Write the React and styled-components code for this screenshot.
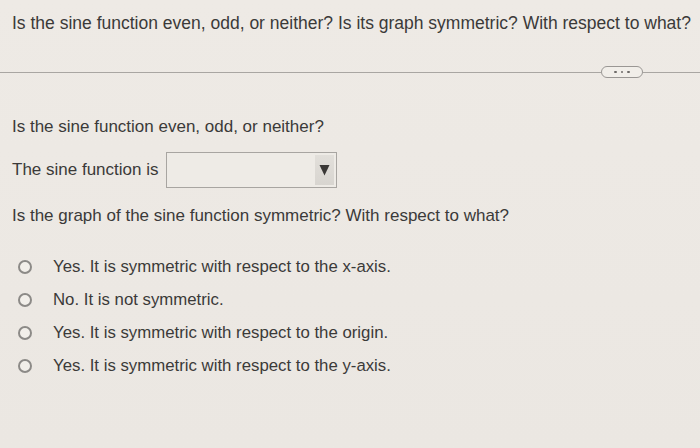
import React from "react";
import styled, { createGlobalStyle } from "styled-components";

const GlobalStyle = createGlobalStyle`
    html, body {
        margin: 0;
        padding: 0;
        background: #ece8e3;
    }
    body {
        font-family: "Liberation Sans", Arial, sans-serif;
        color: #3b3a39;
    }
`;

const Page = styled.div`
    width: 700px;
    height: 448px;
    overflow: hidden;
    background: linear-gradient(180deg, #eeeae5 0%, #ebe7e2 100%);
`;

const Title = styled.div`
    padding: 13px 12px 0;
    font-size: 17.5px;
    line-height: 20px;
    white-space: nowrap;
`;

const DividerRow = styled.div`
    display: flex;
    align-items: center;
    margin-top: 33px;
`;

const Line = styled.div`
    height: 1px;
    background: #a9a6a2;
    flex: ${props => props.grow ? 1 : "none"};
    width: ${props => props.grow ? "auto" : `${props.w}px`};
`;

const MoreButton = styled.div`
    display: flex;
    align-items: center;
    justify-content: center;
    gap: 4px;
    width: 40px;
    height: 10px;
    border: 1.5px solid #9a9794;
    border-radius: 7px;
    background: #f1eee9;
`;

const Dot = styled.span`
    width: 2.5px;
    height: 2.5px;
    border-radius: 50%;
    background: #6e6b68;
`;

const Body = styled.div`
    padding: 0 12px;
`;

const Question = styled.div`
    font-size: 17px;
    line-height: 20px;
    margin-top: ${props => props.top}px;
`;

const AnswerRow = styled.div`
    display: flex;
    align-items: center;
    gap: 8px;
    margin-top: 15px;
    font-size: 17px;
`;

const SelectBox = styled.div`
    display: flex;
    justify-content: flex-end;
    align-items: stretch;
    width: 169px;
    height: 34px;
    border: 1px solid #a8a5a1;
    background: #eeebe6;
`;

const ArrowCell = styled.div`
    display: flex;
    align-items: center;
    justify-content: center;
    width: 19px;
    margin: 2px 2px 2px 0;
    background: linear-gradient(180deg, #e2dfda 0%, #d8d5d0 100%);
`;

const Options = styled.div`
    display: flex;
    flex-direction: column;
    gap: 13px;
    margin-top: 31px;
`;

const Option = styled.label`
    display: flex;
    align-items: center;
    gap: 21px;
    height: 20px;
    font-size: 16.8px;
    padding-left: 6px;
`;

const Radio = styled.span`
    width: 10px;
    height: 10px;
    border: 2px solid #8c8a87;
    border-radius: 50%;
    background: #f2efea;
    flex: none;
`;

const options = [
    "Yes. It is symmetric with respect to the x-axis.",
    "No. It is not symmetric.",
    "Yes. It is symmetric with respect to the origin.",
    "Yes. It is symmetric with respect to the y-axis.",
];

export default function App() {
    return (
        <Page>
            <GlobalStyle />
            <Title>
                Is the sine function even, odd, or neither? Is its graph symmetric? With respect to what?
            </Title>
            <DividerRow>
                <Line grow />
                <MoreButton>
                    <Dot />
                    <Dot />
                    <Dot />
                </MoreButton>
                <Line w={57} />
            </DividerRow>
            <Body>
                <Question top={39}>Is the sine function even, odd, or neither?</Question>
                <AnswerRow>
                    The sine function is
                    <SelectBox>
                        <ArrowCell>
                            <svg width="11" height="12" viewBox="0 0 11 12">
                                <path d="M0.5 1 L10.5 1 L5.5 11.5 Z" fill="#3a3836" />
                            </svg>
                        </ArrowCell>
                    </SelectBox>
                </AnswerRow>
                <Question top={18}>Is the graph of the sine function symmetric? With respect to what?</Question>
                <Options>
                    {options.map(text => (
                        <Option key={text}>
                            <Radio />
                            {text}
                        </Option>
                    ))}
                </Options>
            </Body>
        </Page>
    );
}
